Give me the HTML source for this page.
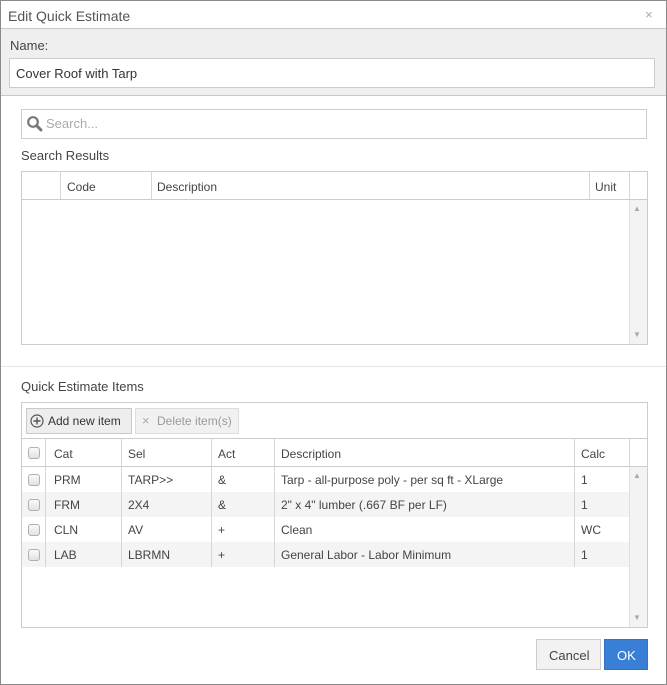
<!DOCTYPE html><html><head><style>
*{box-sizing:border-box;margin:0;padding:0}
body{width:667px;height:685px;position:relative;font-family:"Liberation Sans",sans-serif;font-size:12px;color:#444;background:#fff;overflow:hidden}
.a{position:absolute}
.frame{left:0;top:0;width:667px;height:685px;border:1px solid #8a8a8a}
.t{white-space:nowrap}
.vl{position:absolute;top:0;bottom:0;width:1px;background:#d6d6d6}
.cb{position:absolute;width:12px;height:12px;border:1px solid #b0b0b0;border-radius:3px;background:linear-gradient(#fafafa,#e2e2e2)}
</style></head><body>
<div class="a frame"></div>
<div class="a t" style="left:8px;top:8px;font-size:14px;color:#555">Edit Quick Estimate</div>
<div class="a t" style="left:645px;top:7px;font-size:13px;color:#aaa">×</div>
<div class="a" style="left:1px;top:28px;width:665px;height:68px;background:#efefef;border-top:1px solid #c8c8c8;border-bottom:1px solid #c8c8c8"></div>
<div class="a t" style="left:10px;top:38px;font-size:13px;color:#444">Name:</div>
<div class="a" style="left:9px;top:58px;width:646px;height:30px;background:#fff;border:1px solid #ccc"></div>
<div class="a t" style="left:16px;top:66px;font-size:13px;color:#333">Cover Roof with Tarp</div>

<div class="a" style="left:21px;top:109px;width:626px;height:30px;border:1px solid #ccc"></div>
<svg class="a" style="left:26px;top:115px" width="17" height="17" viewBox="0 0 17 17"><circle cx="7" cy="7" r="4.8" fill="none" stroke="#777" stroke-width="2.2"/><path d="M10.5 10.5L15 15" stroke="#777" stroke-width="3" stroke-linecap="round"/></svg>
<div class="a t" style="left:46px;top:116px;font-size:13px;color:#aaa">Search...</div>
<div class="a t" style="left:21px;top:148px;font-size:13px;color:#444">Search Results</div>

<div class="a" style="left:21px;top:171px;width:627px;height:174px;border:1px solid #ccc">
 <div class="a" style="left:0;top:0;width:625px;height:28px;border-bottom:1px solid #ccc">
  <div class="vl" style="left:38px"></div><div class="vl" style="left:129px"></div><div class="vl" style="left:567px"></div><div class="vl" style="left:607px"></div>
  <div class="a t" style="left:45px;top:8px">Code</div><div class="a t" style="left:135px;top:8px">Description</div><div class="a t" style="left:573px;top:8px">Unit</div>
 </div>
 <div class="a" style="left:607px;top:28px;width:18px;height:144px;background:#f3f3f3;border-left:1px solid #e0e0e0"></div>
 <div class="a t" style="left:611px;top:32px;font-size:8px;color:#aaa">▲</div>
 <div class="a t" style="left:611px;top:158px;font-size:8px;color:#aaa">▼</div>
</div>
<div class="a" style="left:1px;top:366px;width:665px;height:1px;background:#e6e6e6"></div>
<div class="a t" style="left:21px;top:379px;font-size:13px;color:#444">Quick Estimate Items</div>

<div class="a" style="left:21px;top:402px;width:627px;height:226px;border:1px solid #ccc">
 <div class="a" style="left:4px;top:5px;width:106px;height:26px;border:1px solid #c9c9c9;background:#eee"></div>
 <svg class="a" style="left:8px;top:11px" width="14" height="14" viewBox="0 0 14 14"><circle cx="7" cy="7" r="6" fill="none" stroke="#555" stroke-width="1.2"/><path d="M7 3.5v7M3.5 7h7" stroke="#555" stroke-width="1.4"/></svg>
 <div class="a t" style="left:26px;top:11px;color:#333">Add new item</div>
 <div class="a" style="left:113px;top:5px;width:104px;height:26px;border:1px solid #ddd;background:#f1f1f1"></div>
 <div class="a t" style="left:120px;top:10px;color:#aaa;font-size:13px">×</div>
 <div class="a t" style="left:135px;top:11px;color:#999">Delete item(s)</div>
 <div class="a" style="left:0;top:35px;width:625px;height:29px;border-top:1px solid #ccc;border-bottom:1px solid #ccc">
  <div class="vl" style="left:23px"></div><div class="vl" style="left:99px"></div><div class="vl" style="left:189px"></div><div class="vl" style="left:252px"></div><div class="vl" style="left:552px"></div><div class="vl" style="left:607px"></div>
  <div class="cb" style="left:6px;top:8px"></div>
  <div class="a t" style="left:32px;top:8px">Cat</div><div class="a t" style="left:106px;top:8px">Sel</div><div class="a t" style="left:196px;top:8px">Act</div><div class="a t" style="left:259px;top:8px">Description</div><div class="a t" style="left:559px;top:8px">Calc</div>
 </div>
 <div class="a" style="left:0;top:64px;width:607px;height:100px">
  <div class="a" style="left:0;top:25px;width:607px;height:25px;background:#f4f4f4"></div>
  <div class="a" style="left:0;top:75px;width:607px;height:25px;background:#f4f4f4"></div>
  <div class="vl" style="left:23px;bottom:0"></div><div class="vl" style="left:99px"></div><div class="vl" style="left:189px"></div><div class="vl" style="left:252px"></div><div class="vl" style="left:552px"></div>
  <div class="cb" style="left:6px;top:7px"></div><div class="cb" style="left:6px;top:32px"></div><div class="cb" style="left:6px;top:57px"></div><div class="cb" style="left:6px;top:82px"></div>
  <div class="a t" style="left:32px;top:6px">PRM</div><div class="a t" style="left:106px;top:6px">TARP&gt;&gt;</div><div class="a t" style="left:196px;top:6px">&amp;</div><div class="a t" style="left:259px;top:6px">Tarp - all-purpose poly - per sq ft - XLarge</div><div class="a t" style="left:559px;top:6px">1</div>
  <div class="a t" style="left:32px;top:31px">FRM</div><div class="a t" style="left:106px;top:31px">2X4</div><div class="a t" style="left:196px;top:31px">&amp;</div><div class="a t" style="left:259px;top:31px">2" x 4" lumber (.667 BF per LF)</div><div class="a t" style="left:559px;top:31px">1</div>
  <div class="a t" style="left:32px;top:56px">CLN</div><div class="a t" style="left:106px;top:56px">AV</div><div class="a t" style="left:196px;top:56px">+</div><div class="a t" style="left:259px;top:56px">Clean</div><div class="a t" style="left:559px;top:56px">WC</div>
  <div class="a t" style="left:32px;top:81px">LAB</div><div class="a t" style="left:106px;top:81px">LBRMN</div><div class="a t" style="left:196px;top:81px">+</div><div class="a t" style="left:259px;top:81px">General Labor - Labor Minimum</div><div class="a t" style="left:559px;top:81px">1</div>
 </div>
 <div class="a" style="left:607px;top:64px;width:18px;height:160px;background:#f3f3f3;border-left:1px solid #e0e0e0"></div>
 <div class="a t" style="left:611px;top:68px;font-size:8px;color:#aaa">▲</div>
 <div class="a t" style="left:611px;top:210px;font-size:8px;color:#aaa">▼</div>
</div>

<div class="a" style="left:536px;top:639px;width:65px;height:31px;border:1px solid #ccc;background:#f2f2f2"></div>
<div class="a t" style="left:549px;top:648px;font-size:13px;color:#444">Cancel</div>
<div class="a" style="left:604px;top:639px;width:44px;height:31px;background:#3a7fd6;border:1px solid #3373c4"></div>
<div class="a t" style="left:617px;top:648px;font-size:13px;color:#fff">OK</div>
</body></html>
